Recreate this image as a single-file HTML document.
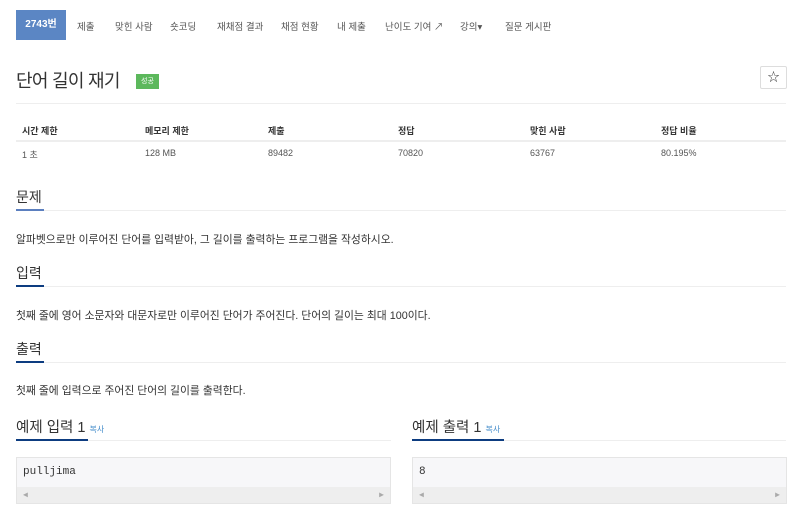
<!DOCTYPE html>
<html><head><meta charset="utf-8"><style>
*{margin:0;padding:0;box-sizing:border-box}
body{width:800px;height:518px;overflow:hidden;background:#fff;font-family:"Liberation Sans","Noto Sans CJK KR",sans-serif;color:#333;position:relative}
.a{position:absolute;white-space:nowrap}
.nav{font-size:9.5px;color:#555;top:19px}
.h{font-size:14px;color:#333}
.ul{position:absolute;height:1px;background:#eee}
.bl{position:absolute;height:2px;background:#0d3c80}
.t{font-size:10.8px;color:#333}
.th{font-size:9px;font-weight:bold;top:124px}
.td{font-size:9px;top:148px;color:#555}
.pre{position:absolute;top:457px;height:47px;background:#f7f7f9;border:1px solid #e5e5e5;font-family:"Liberation Mono",monospace;font-size:11px;color:#333;padding:8px 6px}
.sb{position:absolute;left:0;right:0;bottom:0;height:16px;background:#eee;color:#aaa;font-size:8px}
</style></head><body>
<div class="a" style="left:16px;top:10px;width:50px;height:30px;background:#5b86c4;color:#fff;font-size:10px;font-weight:bold;text-align:center;line-height:30px">2743번</div>
<div class="a nav" style="left:77px">제출</div>
<div class="a nav" style="left:115px">맞힌 사람</div>
<div class="a nav" style="left:170px">숏코딩</div>
<div class="a nav" style="left:217px">재채점 결과</div>
<div class="a nav" style="left:281px">채점 현황</div>
<div class="a nav" style="left:337px">내 제출</div>
<div class="a nav" style="left:385px">난이도 기여 ↗</div>
<div class="a nav" style="left:460px">강의▾</div>
<div class="a nav" style="left:505px">질문 게시판</div>
<div class="a" style="left:16px;top:67px;font-size:18px;color:#333;letter-spacing:-0.7px">단어 길이 재기</div>
<div class="a" style="left:136px;top:74px;width:23px;height:15px;background:#5cb85c;color:#fff;font-size:7px;text-align:center;line-height:15px">성공</div>
<div class="a" style="left:760px;top:66px;width:27px;height:23px;border:1px solid #ddd;border-radius:2px;text-align:center;line-height:21px;font-size:12px">☆</div>
<div class="ul" style="left:16px;width:770px;top:103px"></div>
<div class="a th" style="left:22px">시간 제한</div><div class="a th" style="left:145px">메모리 제한</div><div class="a th" style="left:268px">제출</div><div class="a th" style="left:398px">정답</div><div class="a th" style="left:530px">맞힌 사람</div><div class="a th" style="left:661px">정답 비율</div>
<div class="ul" style="left:16px;width:770px;top:140px;height:2px"></div>
<div class="a td" style="left:22px">1 초</div><div class="a td" style="left:145px">128 MB</div><div class="a td" style="left:268px">89482</div><div class="a td" style="left:398px">70820</div><div class="a td" style="left:530px">63767</div><div class="a td" style="left:661px">80.195%</div>
<div class="a h" style="left:16px;top:187px">문제</div>
<div class="ul" style="left:16px;width:770px;top:210px"></div><div class="bl" style="left:16px;width:28px;top:209px;background:#5b7fbf"></div>
<div class="a t" style="left:16px;top:231px">알파벳으로만 이루어진 단어를 입력받아, 그 길이를 출력하는 프로그램을 작성하시오.</div>
<div class="a h" style="left:16px;top:263px">입력</div>
<div class="ul" style="left:16px;width:770px;top:286px"></div><div class="bl" style="left:16px;width:28px;top:285px"></div>
<div class="a t" style="left:16px;top:307px">첫째 줄에 영어 소문자와 대문자로만 이루어진 단어가 주어진다. 단어의 길이는 최대 100이다.</div>
<div class="a h" style="left:16px;top:339px">출력</div>
<div class="ul" style="left:16px;width:770px;top:362px"></div><div class="bl" style="left:16px;width:28px;top:361px"></div>
<div class="a t" style="left:16px;top:382px">첫째 줄에 입력으로 주어진 단어의 길이를 출력한다.</div>
<div class="a h" style="left:16px;top:416px;font-size:14.5px">예제 입력 1 <span style="font-size:8px;color:#428bca">복사</span></div>
<div class="ul" style="left:16px;width:375px;top:440px"></div><div class="bl" style="left:16px;width:72px;top:439px"></div>
<div class="a h" style="left:412px;top:416px;font-size:14.5px">예제 출력 1 <span style="font-size:8px;color:#428bca">복사</span></div>
<div class="ul" style="left:412px;width:374px;top:440px"></div><div class="bl" style="left:412px;width:92px;top:439px"></div>
<div class="pre" style="left:16px;width:375px">pulljima<div class="sb"><span style="position:absolute;left:6px;top:3px">◀</span><span style="position:absolute;right:6px;top:3px">▶</span></div></div>
<div class="pre" style="left:412px;width:375px">8<div class="sb"><span style="position:absolute;left:6px;top:3px">◀</span><span style="position:absolute;right:6px;top:3px">▶</span></div></div>
</body></html>
